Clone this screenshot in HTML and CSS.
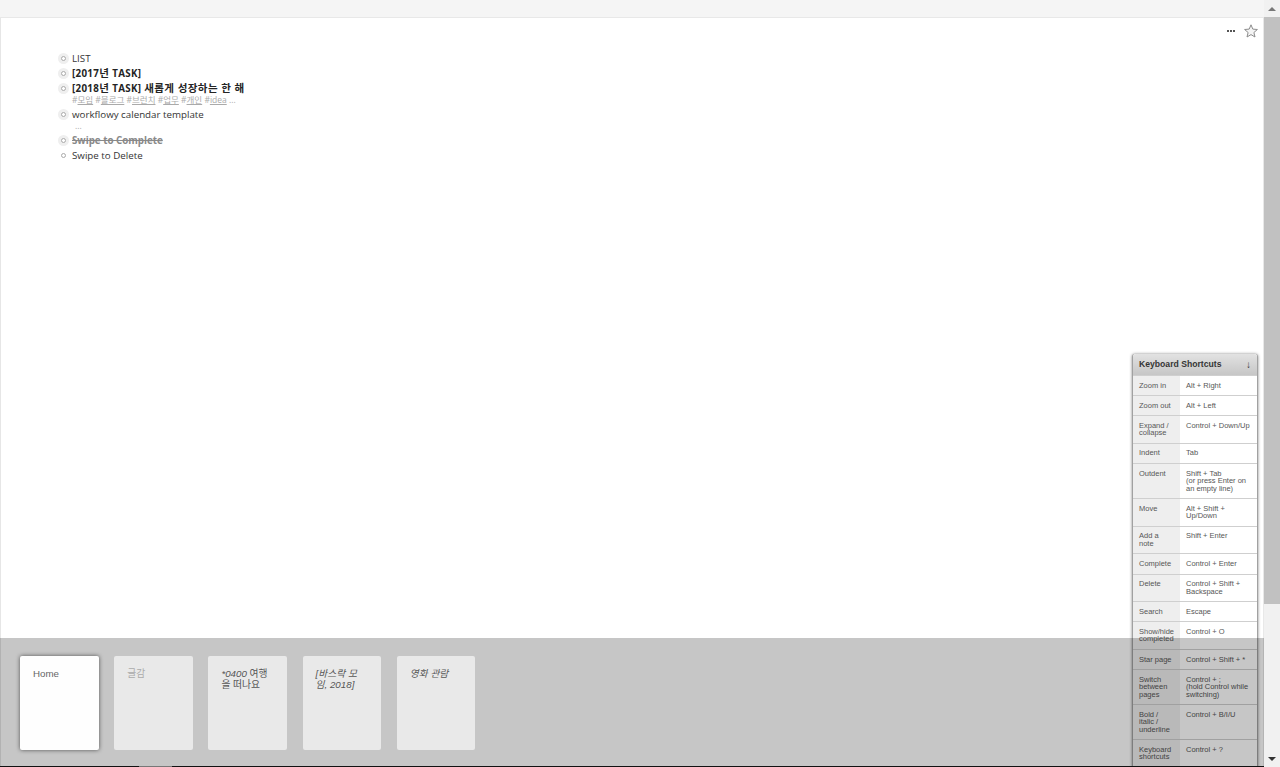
FILE: index.html
```html
<!DOCTYPE html>
<html lang="ko">
<head>
<meta charset="utf-8">
<title>WorkFlowy</title>
<link rel="stylesheet" href="styles.css">
</head>
<body>
<div class="app">
  <div class="main">
    <div class="topbar"></div>
    <div class="page">
      <div class="actions">
        <span class="dots"><i></i><i></i><i></i></span>
        <svg class="star" width="14" height="14" viewBox="0 0 14 14"><path d="M7 .8l1.8 4.3 4.6.4-3.5 3 1.1 4.5L7 10.6l-4 2.4 1.1-4.5-3.5-3 4.6-.4z" fill="#f4f4f4" stroke="#8c8c8c" stroke-width="1"/></svg>
      </div>
      <ul class="tree">
        <li class="item"><span class="bullet"></span><div><span class="name">LIST</span></div></li>
        <li class="item"><span class="bullet"></span><div><span class="name bold">[2017<span class="ko">년</span> TASK]</span></div></li>
        <li class="item"><span class="bullet"></span><div><span class="name bold">[2018<span class="ko">년</span> TASK] <span class="ko">새롭게 성장하는 한 해</span></span>
          <div class="note">#<u>모임</u> #<u>블로그</u> #<u>브런치</u> #<u>업무</u> #<u>개인</u> #<u>idea</u> ...</div></div></li>
        <li class="item"><span class="bullet"></span><div><span class="name">workflowy calendar template</span>
          <div class="note dotsnote">...</div></div></li>
        <li class="item"><span class="bullet"></span><div><span class="name done">Swipe to Complete</span></div></li>
        <li class="item"><span class="bullet plain"></span><div><span class="name">Swipe to Delete</span></div></li>
      </ul>
    </div>
    <aside class="keys">
      <div class="keys-head"><span>Keyboard Shortcuts</span><span class="arrow">↓</span></div>
      <div class="row"><div class="k">Zoom in</div><div class="v">Alt + Right</div></div>
      <div class="row"><div class="k">Zoom out</div><div class="v">Alt + Left</div></div>
      <div class="row"><div class="k">Expand /<br>collapse</div><div class="v">Control + Down/Up</div></div>
      <div class="row"><div class="k">Indent</div><div class="v">Tab</div></div>
      <div class="row"><div class="k">Outdent</div><div class="v">Shift + Tab<br>(or press Enter on an empty line)</div></div>
      <div class="row"><div class="k">Move</div><div class="v">Alt + Shift + Up/Down</div></div>
      <div class="row"><div class="k">Add a<br>note</div><div class="v">Shift + Enter</div></div>
      <div class="row"><div class="k">Complete</div><div class="v">Control + Enter</div></div>
      <div class="row"><div class="k">Delete</div><div class="v">Control + Shift + Backspace</div></div>
      <div class="row"><div class="k">Search</div><div class="v">Escape</div></div>
      <div class="row"><div class="k">Show/hide<br>completed</div><div class="v">Control + O</div></div>
      <div class="row"><div class="k">Star page</div><div class="v">Control + Shift + *</div></div>
      <div class="row"><div class="k">Switch<br>between<br>pages</div><div class="v">Control + ;<br>(hold Control while switching)</div></div>
      <div class="row"><div class="k">Bold /<br>italic /<br>underline</div><div class="v">Control + B/I/U</div></div>
      <div class="row"><div class="k">Keyboard<br>shortcuts</div><div class="v">Control + ?</div></div>
    </aside>
    <div class="dock">
      <div class="card active">Home</div>
      <div class="card muted">글감</div>
      <div class="card"><em>*0400</em> 여행을 떠나요</div>
      <div class="card"><em>[바스락 모임, 2018]</em></div>
      <div class="card"><em>영화 관람</em></div>
    </div>
    <div class="edge"><span></span></div>
  </div>
  <div class="scrollbar">
    <div class="sb-btn"><span class="up"></span></div>
    <div class="sb-track"><div class="sb-thumb"></div></div>
    <div class="sb-btn"><span class="down"></span></div>
  </div>
</div>
</body>
</html>
```
FILE: styles.css
```css
html, body { margin: 0; height: 100%; overflow: hidden; }
body { font-family: "Open Sans", "Noto Sans CJK KR", sans-serif; background: #fff; color: #333; }
.app { display: flex; height: 767px; }
.main { flex: 1; position: relative; overflow: hidden; display: flex; flex-direction: column; }
.topbar { height: 17px; background: #f5f5f5; border-bottom: 1px solid #e8e8e8; }
.page { flex: 1; border-left: 1px solid #e6e6e6; border-right: 1px solid #e8e8e8; position: relative; }
.actions { position: absolute; right: 5px; top: 6px; display: flex; align-items: center; gap: 9px; }
.dots { display: flex; gap: 1px; }
.dots i { width: 2px; height: 2px; background: #555; }
.tree { list-style: none; margin: 0; padding: 33px 0 0 57px; opacity: .99; }
.item { display: flex; align-items: flex-start; }
.bullet { width: 11px; height: 11px; margin: 2px 3px 0 0; border-radius: 50%; background: #efefef; position: relative; flex: none; }
.bullet::after { content: ""; position: absolute; left: 3px; top: 3px; width: 5px; height: 5px; border: 1px solid #aaa; border-radius: 50%; background: #fff; box-sizing: border-box; }
.bullet.plain { background: transparent; }
.name { display: block; font-size: 9.75px; line-height: 15px; color: #333; }
.bold { font-weight: 700; color: #222; letter-spacing: .33px; }
.ko { font-size: 10.5px; letter-spacing: .45px; }
.done { font-weight: 700; color: #888; text-decoration: line-through; letter-spacing: 0; }
.note { font-size: 8.5px; line-height: 8px; padding-bottom: 3px; color: #aaa; }
.note u { color: #aaa; }
.dotsnote { padding-left: 3px; }
.keys { position: absolute; left: 1132px; top: 354px; width: 124px; border: 1px solid #a0a0a0; border-top: 0; border-radius: 3px 3px 0 0; box-shadow: 0 0 3px rgba(0,0,0,.5); background: #fff; font-family: "Liberation Sans", sans-serif; font-size: 7.5px; line-height: 7.5px; color: #555; opacity: .99; }
.keys-head { height: 21px; display: flex; justify-content: space-between; align-items: center; padding: 0 6px; background: linear-gradient(#e2e2e2, #c6c6c6); border-radius: 3px 3px 0 0; font-size: 8.65px; font-weight: 700; color: #333; }
.arrow { font-weight: 400; font-size: 10px; }
.row { display: flex; border-top: 1px solid #cfcfcf; }
.k { width: 47px; flex: none; background: #eee; padding: 5.5px 2px 6.15px 6px; box-sizing: border-box; }
.v { flex: 1; padding: 5.5px 4px 6.15px 6px; }
.dock { position: absolute; left: 0; right: 0; top: 638px; height: 128px; background: rgba(0,0,0,.225); display: flex; gap: 15.7px; padding: 18px 20px 0; box-sizing: border-box; font-family: "Liberation Sans", "Noto Sans CJK KR", sans-serif; }
.card { width: 78.5px; height: 93.75px; box-sizing: border-box; background: #eaeaea; border-radius: 2px; padding: 12px 13px; font-size: 9.75px; line-height: 11px; color: #555; opacity: .99; }
.card.active { background: #fff; box-shadow: 0 0 4px rgba(0,0,0,.6); color: #666; }
.card.muted { color: #aaa; }
.edge { position: absolute; left: 0; right: 0; bottom: 0; height: 1px; background: #111; padding-left: 139px; }
.edge span { display: block; width: 33px; height: 1px; background: #777; }
.scrollbar { width: 16px; background: #f1f1f1; display: flex; flex-direction: column; }
.sb-btn { height: 17px; display: flex; align-items: center; justify-content: center; flex: none; }
.up { border: 4px solid transparent; border-top: 0; border-bottom: 4px solid #777; }
.down { border: 4px solid transparent; border-bottom: 0; border-top: 4px solid #333; }
.sb-track { flex: 1; }
.sb-thumb { height: 587px; background: #c1c1c1; }
```
